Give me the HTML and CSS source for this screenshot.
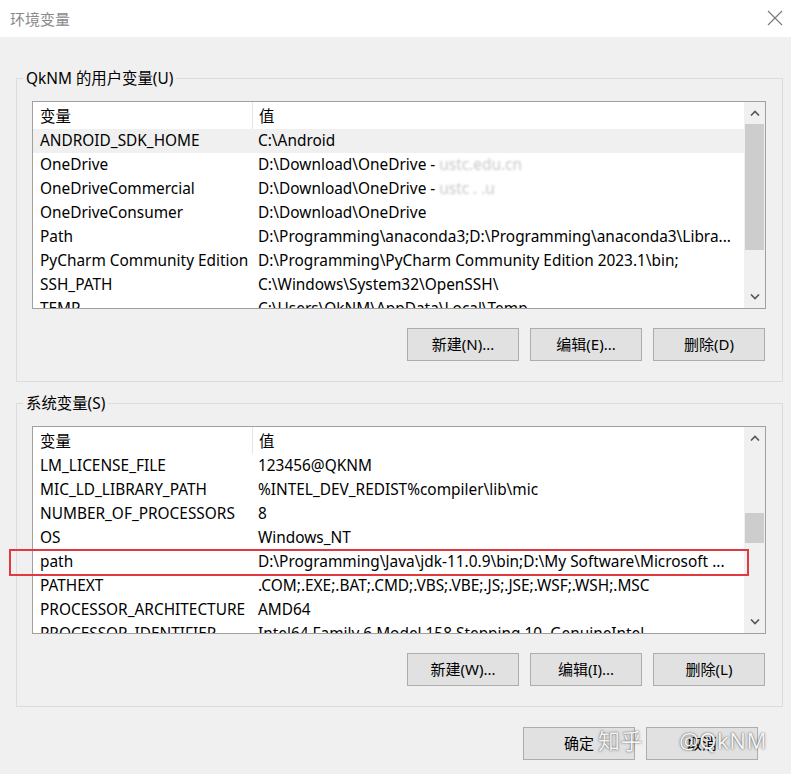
FILE: index.html
```html
<!DOCTYPE html>
<html lang="zh-CN">
<head>
    <meta charset="UTF-8">
    <title>环境变量</title>
    <link rel="stylesheet" href="styles.css">
</head>
<body>
    <div class="titlebar">
        <div class="title">环境变量</div>
        <svg class="close" width="16" height="16" viewBox="0 0 16 16">
            <path d="M1 1 L15 15 M15 1 L1 15" stroke="#777" stroke-width="1.1" fill="none"/>
        </svg>
    </div>

    <div class="group group-user">
        <div class="group-label">QkNM 的用户变量(U)</div>
        <div class="list">
            <div class="rows">
                <div class="row head">
                    <div class="name">变量</div>
                    <div class="value">值</div>
                </div>
                <div class="row selected">
                    <div class="name">ANDROID_SDK_HOME</div>
                    <div class="value">C:\Android</div>
                </div>
                <div class="row">
                    <div class="name">OneDrive</div>
                    <div class="value">D:\Download\OneDrive - <span class="blur">ustc.edu.cn</span></div>
                </div>
                <div class="row">
                    <div class="name">OneDriveCommercial</div>
                    <div class="value">D:\Download\OneDrive - <span class="blur">ustc .  .u</span></div>
                </div>
                <div class="row">
                    <div class="name">OneDriveConsumer</div>
                    <div class="value">D:\Download\OneDrive</div>
                </div>
                <div class="row">
                    <div class="name">Path</div>
                    <div class="value">D:\Programming\anaconda3;D:\Programming\anaconda3\Libra...</div>
                </div>
                <div class="row">
                    <div class="name">PyCharm Community Edition</div>
                    <div class="value">D:\Programming\PyCharm Community Edition 2023.1\bin;</div>
                </div>
                <div class="row">
                    <div class="name">SSH_PATH</div>
                    <div class="value">C:\Windows\System32\OpenSSH\</div>
                </div>
                <div class="row">
                    <div class="name">TEMP</div>
                    <div class="value">C:\Users\QkNM\AppData\Local\Temp</div>
                </div>
            </div>
            <div class="scrollbar">
                <div class="arrow">
                    <svg width="10" height="6" viewBox="0 0 10 6"><polyline points="1,5.5 5,1.5 9,5.5" fill="none" stroke="#555" stroke-width="1.6"/></svg>
                </div>
                <div class="track">
                    <div class="thumb thumb-user"></div>
                </div>
                <div class="arrow">
                    <svg width="10" height="6" viewBox="0 0 10 6"><polyline points="1,0.5 5,4.5 9,0.5" fill="none" stroke="#555" stroke-width="1.6"/></svg>
                </div>
            </div>
        </div>
        <div class="buttons">
            <div class="btn">新建(N)...</div>
            <div class="btn">编辑(E)...</div>
            <div class="btn">删除(D)</div>
        </div>
    </div>

    <div class="group group-system">
        <div class="group-label">系统变量(S)</div>
        <div class="list">
            <div class="rows">
                <div class="row head">
                    <div class="name">变量</div>
                    <div class="value">值</div>
                </div>
                <div class="row">
                    <div class="name">LM_LICENSE_FILE</div>
                    <div class="value">123456@QKNM</div>
                </div>
                <div class="row">
                    <div class="name">MIC_LD_LIBRARY_PATH</div>
                    <div class="value">%INTEL_DEV_REDIST%compiler\lib\mic</div>
                </div>
                <div class="row">
                    <div class="name">NUMBER_OF_PROCESSORS</div>
                    <div class="value">8</div>
                </div>
                <div class="row">
                    <div class="name">OS</div>
                    <div class="value">Windows_NT</div>
                </div>
                <div class="row">
                    <div class="name">path</div>
                    <div class="value">D:\Programming\Java\jdk-11.0.9\bin;D:\My Software\Microsoft ...</div>
                </div>
                <div class="row">
                    <div class="name">PATHEXT</div>
                    <div class="value">.COM;.EXE;.BAT;.CMD;.VBS;.VBE;.JS;.JSE;.WSF;.WSH;.MSC</div>
                </div>
                <div class="row">
                    <div class="name">PROCESSOR_ARCHITECTURE</div>
                    <div class="value">AMD64</div>
                </div>
                <div class="row">
                    <div class="name">PROCESSOR_IDENTIFIER</div>
                    <div class="value">Intel64 Family 6 Model 158 Stepping 10, GenuineIntel</div>
                </div>
            </div>
            <div class="scrollbar">
                <div class="arrow">
                    <svg width="10" height="6" viewBox="0 0 10 6"><polyline points="1,5.5 5,1.5 9,5.5" fill="none" stroke="#555" stroke-width="1.6"/></svg>
                </div>
                <div class="track">
                    <div class="thumb thumb-system"></div>
                </div>
                <div class="arrow">
                    <svg width="10" height="6" viewBox="0 0 10 6"><polyline points="1,0.5 5,4.5 9,0.5" fill="none" stroke="#555" stroke-width="1.6"/></svg>
                </div>
            </div>
        </div>
        <div class="buttons">
            <div class="btn">新建(W)...</div>
            <div class="btn">编辑(I)...</div>
            <div class="btn">删除(L)</div>
        </div>
    </div>

    <div class="footer">
        <div class="btn">确定</div>
        <div class="btn">取消</div>
    </div>

    <!-- 标注与水印 -->
    <div class="highlight"></div>
    <div class="watermark">知乎<span class="wm-id">@QkNM</span></div>
</body>
</html>
```

FILE: styles.css
```css
body {
    margin: 0;
    padding: 0;
    width: 791px;
    height: 774px;
    overflow: hidden;
    position: relative;
    background: #f0f0f0;
    font-family: 'Noto Sans', 'Noto Sans CJK SC', sans-serif;
    font-size: 15.4px;
    color: #000;
}

.titlebar {
    height: 37px;
    background: #ffffff;
    display: flex;
    align-items: center;
    justify-content: space-between;
    padding: 0 8px 0 10px;
}

.title {
    color: #8a8a8a;
    font-size: 15px;
}

.close {
    margin-top: -1px;
}

.group {
    margin: 0 8px 0 16px;
    border: 1px solid #dcdcdc;
    padding-bottom: 20px;
}

.group-user {
    margin-top: 41px;
}

.group-system {
    margin-top: 21px;
}

.group-label {
    display: block;
    width: max-content;
    margin: -11px 0 0 6px;
    padding: 0 3px;
    line-height: 22px;
    background: #f0f0f0;
}

.list {
    margin: 11px 16px 0 15px;
    height: 206px;
    border: 1px solid #a0a0a0;
    background: #ffffff;
    display: flex;
    overflow: hidden;
}

.rows {
    flex: 1;
    overflow: hidden;
}

.row {
    display: flex;
    height: 24px;
    line-height: 24px;
    white-space: nowrap;
}

.row.head {
    height: 27px;
    line-height: 29px;
}

.row.selected {
    background: #f0f0f0;
}

.name {
    width: 212px;
    padding-left: 7px;
    overflow: hidden;
}

.value {
    flex: 1;
    padding-left: 6px;
    overflow: hidden;
}

.head .name {
    border-right: 1px solid #e5e5e5;
}

.blur {
    color: #c8c8c8;
    filter: blur(1.2px);
}

.scrollbar {
    width: 21px;
    background: #f0f0f0;
    display: flex;
    flex-direction: column;
}

.arrow {
    height: 22px;
    display: flex;
    align-items: center;
    justify-content: center;
}

.track {
    flex: 1;
}

.thumb {
    margin: 0 1px;
    background: #cdcdcd;
}

.thumb-user {
    height: 126px;
}

.thumb-system {
    margin-top: 64px;
    height: 30px;
}

.buttons {
    display: flex;
    justify-content: flex-end;
    gap: 11px;
    margin: 19px 17px 0 0;
}

.btn {
    width: 110px;
    height: 31px;
    line-height: 31px;
    font-size: 15px;
    text-align: center;
    background: #e1e1e1;
    border: 1px solid #adadad;
}

.footer {
    display: flex;
    justify-content: flex-end;
    gap: 11px;
    margin: 20px 33px 0 0;
}

.highlight {
    position: absolute;
    left: 9px;
    top: 549px;
    width: 736px;
    height: 23px;
    border: 2px solid #e2393f;
}

.watermark {
    position: absolute;
    left: 598px;
    top: 723px;
    font-size: 22px;
    color: rgba(255, 255, 255, 0.95);
    text-shadow: 0 0 1px rgba(0, 0, 0, 0.6), 0 0 3px rgba(0, 0, 0, 0.35);
    letter-spacing: 0.5px;
}

.wm-id {
    margin-left: 36px;
}
```
